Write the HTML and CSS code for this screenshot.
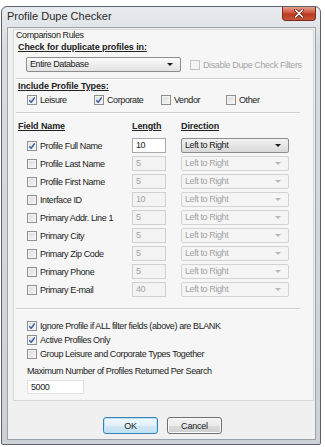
FILE: index.html
```html
<html lang="en">

<head>
    <title>Profile Dupe Checker</title>
    <link rel="stylesheet" href="styles.css">
</head>

<body>
    <div class="window">
        <div class="titlebar">
            <span class="title">Profile Dupe Checker</span>
            <span class="close">
                <svg width="10" height="9" viewBox="0 0 10 9">
                    <path d="M1.5 1 L8.5 8 M8.5 1 L1.5 8" stroke="#5a1a10" stroke-width="3" stroke-linecap="round" />
                    <path d="M1.5 1 L8.5 8 M8.5 1 L1.5 8" stroke="#fff" stroke-width="1.6" stroke-linecap="round" />
                </svg>
            </span>
        </div>

        <div class="client">
            <div class="panel">
                <div class="caption">Comparison Rules</div>
                <div class="heading">Check for duplicate profiles in:</div>
                <div class="db-row">
                    <div class="select db">Entire Database<span class="arrow"></span></div>
                    <div class="check disabled"><span class="box"></span>Disable Dupe Check Filters</div>
                </div>

                <div class="sep"></div>

                <div class="heading">Include Profile Types:</div>
                <div class="types">
                    <div class="check"><span class="box on"></span>Leisure</div>
                    <div class="check"><span class="box on"></span>Corporate</div>
                    <div class="check"><span class="box"></span>Vendor</div>
                    <div class="check"><span class="box"></span>Other</div>
                </div>

                <div class="sep"></div>

                <div class="fields">
                    <div class="col-head">Field Name</div>
                    <div class="col-head">Length</div>
                    <div class="col-head">Direction</div>

                    <div class="check"><span class="box on"></span>Profile Full Name</div>
                    <div class="field">10</div>
                    <div class="select">Left to Right<span class="arrow"></span></div>

                    <div class="check"><span class="box"></span>Profile Last Name</div>
                    <div class="field off">5</div>
                    <div class="select off">Left to Right<span class="arrow"></span></div>

                    <div class="check"><span class="box"></span>Profile First Name</div>
                    <div class="field off">5</div>
                    <div class="select off">Left to Right<span class="arrow"></span></div>

                    <div class="check"><span class="box"></span>Interface ID</div>
                    <div class="field off">10</div>
                    <div class="select off">Left to Right<span class="arrow"></span></div>

                    <div class="check"><span class="box"></span>Primary Addr. Line 1</div>
                    <div class="field off">5</div>
                    <div class="select off">Left to Right<span class="arrow"></span></div>

                    <div class="check"><span class="box"></span>Primary City</div>
                    <div class="field off">5</div>
                    <div class="select off">Left to Right<span class="arrow"></span></div>

                    <div class="check"><span class="box"></span>Primary Zip Code</div>
                    <div class="field off">5</div>
                    <div class="select off">Left to Right<span class="arrow"></span></div>

                    <div class="check"><span class="box"></span>Primary Phone</div>
                    <div class="field off">5</div>
                    <div class="select off">Left to Right<span class="arrow"></span></div>

                    <div class="check"><span class="box"></span>Primary E-mail</div>
                    <div class="field off">40</div>
                    <div class="select off">Left to Right<span class="arrow"></span></div>
                </div>

                <div class="sep low"></div>

                <div class="options">
                    <div class="check"><span class="box on"></span>Ignore Profile if ALL filter fields (above) are BLANK</div>
                    <div class="check"><span class="box on"></span>Active Profiles Only</div>
                    <div class="check"><span class="box"></span>Group Leisure and Corporate Types Together</div>
                </div>
                <div class="max-label">Maximum Number of Profiles Returned Per Search</div>
                <div class="field max">5000</div>
            </div>

            <div class="buttons">
                <button class="btn default">OK</button>
                <button class="btn">Cancel</button>
            </div>
        </div>
    </div>
</body>
</html>
```

FILE: styles.css
```css
html,
body {
    padding: 0;
    margin: 0;
}

* {
    box-sizing: border-box;
}

body {
    background-color: #fff;
    font-family: "Liberation Sans", Arial, sans-serif;
    font-size: 9px;
    letter-spacing: -0.4px;
    color: #222;
}

.window {
    margin: 6px 0 0 1px;
    width: 320px;
    height: 439px;
    border: 1px solid #5d6168;
    border-radius: 6px 6px 2px 2px;
    background: linear-gradient(#e8ebef, #d9dde2 40px, #cdd1d7);
    padding: 0 4px 4px 5px;
    display: flex;
    flex-direction: column;
}

.titlebar {
    height: 20px;
    display: flex;
    align-items: flex-start;
    justify-content: space-between;
}

.title {
    font-size: 11px;
    letter-spacing: 0;
    line-height: 17px;
    margin-top: 1px;
    color: #2a2a2a;
}

.close {
    width: 34px;
    height: 14px;
    border: 1px solid #7a2b1f;
    border-top: 0;
    border-radius: 0 0 4px 4px;
    background: linear-gradient(#e4a08f, #d0533a 45%, #b83a22 55%, #c8563c);
    display: flex;
    align-items: center;
    justify-content: center;
}

.client {
    flex: 1;
    border: 1px solid #9aa1a9;
    background-color: #f0f0f0;
    display: flex;
    flex-direction: column;
}

.panel {
    margin: 1px 1px 0 5px;
    border: 1px solid #d8d8d8;
    background-color: #f6f6f6;
    padding: 0 0 6px 4px;
}

.caption {
    height: 11px;
    line-height: 11px;
    margin-left: -2px;
}

.heading {
    font-weight: bold;
    letter-spacing: -0.1px;
    text-decoration: underline;
    line-height: 13px;
    height: 13px;
}

.db-row {
    margin-top: 3px;
    display: flex;
    align-items: center;
    gap: 9px;
}

.select {
    position: relative;
    height: 15px;
    line-height: 13px;
    padding-left: 3px;
    border: 1px solid #8c8c8c;
    border-radius: 2px;
    background: linear-gradient(#f3f3f3, #e6e6e6 50%, #d9d9d9);
}

.select.db {
    width: 155px;
    margin-left: 8px;
    background: linear-gradient(#fbfbfb, #eeeeee 50%, #e3e3e3);
}

.select.off {
    border-color: #d3d3d3;
    background: #f5f5f5;
    color: #a3a3a3;
}

.arrow {
    position: absolute;
    right: 7px;
    top: 5px;
    border-left: 3px solid transparent;
    border-right: 3px solid transparent;
    border-top: 3px solid #1b1b1b;
}

.select.off .arrow {
    border-top-color: #b8b8b8;
}

.check {
    display: flex;
    align-items: center;
    height: 13px;
    white-space: nowrap;
}

.check.disabled {
    color: #a5a5a5;
}

.box {
    width: 10px;
    height: 10px;
    margin-right: 3px;
    border: 1px solid #8e8f8f;
    background: linear-gradient(135deg, #dcdcdc, #f6f6f6);
    box-shadow: inset 0 0 0 1px #f4f4f4;
    flex: none;
}

.check.disabled .box {
    border-color: #c4c4c4;
    background: #f4f4f4;
}

.box.on {
    background-image: url("data:image/svg+xml,%3Csvg xmlns='http://www.w3.org/2000/svg' viewBox='0 0 8 8'%3E%3Cpath d='M1.2 4.2 L3.2 6.3 L6.8 1.4' fill='none' stroke='%23405ea3' stroke-width='1.5'/%3E%3C/svg%3E"), linear-gradient(135deg, #dcdcdc, #f6f6f6);
    background-size: 8px 8px, auto;
    background-repeat: no-repeat;
}

.sep {
    width: 284px;
    margin: 6px 0 0 -2px;
    height: 2px;
    border-top: 1px solid #cfcfcf;
    border-bottom: 1px solid #fff;
}

.sep.low {
    margin-top: 11px;
}

.types {
    display: grid;
    grid-template-columns: 67px 67px 65px auto;
    margin-left: 9px;
}

.fields {
    display: grid;
    grid-template-columns: 114px 49px 108px;
    grid-auto-rows: 15px;
    row-gap: 3px;
    margin-top: 6px;
}

.fields .col-head {
    font-weight: bold;
    letter-spacing: -0.1px;
    text-decoration: underline;
    height: 12px;
    line-height: 12px;
}

.fields .check {
    height: 15px;
    padding-left: 9px;
}

.field {
    width: 34px;
    height: 15px;
    line-height: 13px;
    padding-left: 3px;
    border: 1px solid #a9a9a9;
    background-color: #fff;
}

.field.off {
    border-color: #d0d0d0;
    background-color: #f3f3f3;
    color: #a3a3a3;
}

.options {
    margin-top: 9px;
    margin-left: 9px;
}

.options .check {
    height: 14px;
}

.max-label {
    margin: 4px 0 0 9px;
    height: 13px;
    line-height: 13px;
}

.field.max {
    width: 57px;
    height: 14px;
    line-height: 12px;
    margin: 2px 0 0 9px;
    border-color: #e2e2e2;
}

.buttons {
    margin-top: 16px;
    display: flex;
    justify-content: center;
    gap: 9px;
    padding-left: 2px;
}

.btn {
    width: 55px;
    height: 17px;
    padding: 0;
    font-family: inherit;
    font-size: 9px;
    letter-spacing: -0.2px;
    color: #222;
    border: 1px solid #707070;
    border-radius: 3px;
    background: linear-gradient(#f2f2f2, #ebebeb 50%, #dddddd 50%, #cfcfcf);
    box-shadow: inset 0 0 0 1px #fbfbfb;
}

.btn.default {
    border-color: #3c7fb1;
    box-shadow: inset 0 0 0 1px #b6e3f8;
    background: linear-gradient(#eef7fc, #e3f1fa 50%, #d2e9f6 50%, #c2e0f2);
}
```
